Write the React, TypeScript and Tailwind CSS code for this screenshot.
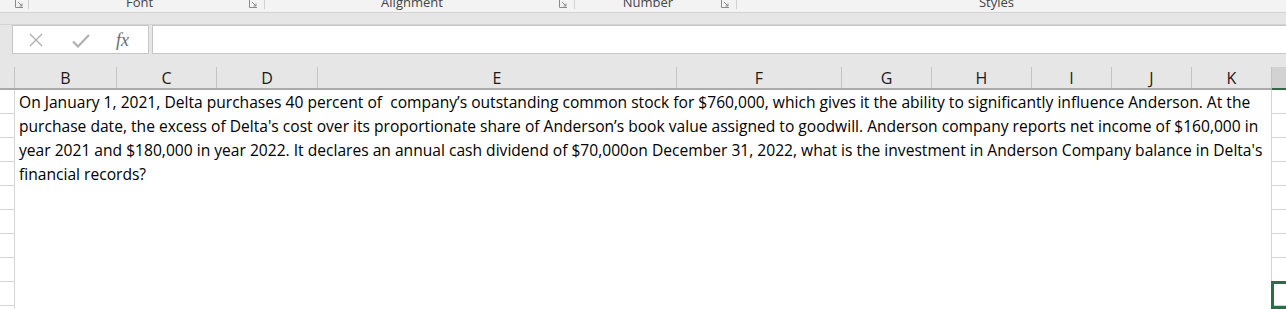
import React from "react";

const cols: { l: string; w: number }[] = [
  { l: "B", w: 102 },
  { l: "C", w: 100 },
  { l: "D", w: 101 },
  { l: "E", w: 359 },
  { l: "F", w: 165 },
  { l: "G", w: 90 },
  { l: "H", w: 100 },
  { l: "I", w: 80 },
  { l: "J", w: 80 },
  { l: "K", w: 80 },
];

function Launcher() {
  return (
    <svg width="9" height="8" viewBox="0 0 9 8" className="block">
      <path d="M0.5 0 V7.5 H8" stroke="#8a8a8a" strokeWidth="1" fill="none" />
      <path d="M3 2 L7 6 M7 3.5 V6 H4.5" stroke="#8a8a8a" strokeWidth="1" fill="none" />
    </svg>
  );
}

function Group({ label, width, launcher }: { label: string; width: number; launcher?: boolean }) {
  return (
    <div className="relative flex h-full shrink-0" style={{ width }}>
      <div className="flex flex-1 justify-center">
        <span className="-mt-[6px] text-[13px] leading-[16px] text-[#444]">{label}</span>
      </div>
      {launcher && (
        <div className="flex items-start pr-[6px]">
          <Launcher />
        </div>
      )}
      <div className="h-[9px] w-px bg-[#d0d0d0]" />
    </div>
  );
}

const lines = [
  "On January 1, 2021, Delta purchases 40 percent of\u00a0 company\u2019s outstanding common stock for $760,000, which gives it the ability to significantly influence Anderson. At the",
  "purchase date, the excess of Delta's cost over its proportionate share of Anderson\u2019s book value assigned to goodwill. Anderson company reports net income of $160,000 in",
  "year 2021 and $180,000 in year 2022. It declares an annual cash dividend of $70,000on December 31, 2022, what is the investment in Anderson Company balance in Delta's",
  "financial records?",
];

export default function App() {
  const rows = Array.from({ length: 10 });
  return (
    <div
      className="relative h-[309px] w-[1286px] overflow-hidden bg-white"
      style={{ fontFamily: '"Open Sans", "Noto Sans", sans-serif' }}
    >
      {/* ribbon group labels */}
      <div className="flex h-[13px] overflow-hidden border-b border-[#d4d4d4] bg-[#f3f3f3]">
        <div className="flex h-full w-[30px] shrink-0 pl-[15px]">
          <div className="pr-[4px]">
            <Launcher />
          </div>
          <div className="h-[9px] w-px bg-[#d0d0d0]" />
        </div>
        <Group label="Font" width={235} launcher />
        <Group label="Alignment" width={310} launcher />
        <Group label="Number" width={162} launcher />
        <div className="flex flex-1 justify-center pr-[30px]">
          <span className="-mt-[6px] text-[13px] leading-[16px] text-[#444]">Styles</span>
        </div>
      </div>
      {/* gray band */}
      <div className="h-[12px] border-b border-[#d4d4d4] bg-[#e6e6e6]" />
      {/* formula bar */}
      <div className="flex h-[29px] bg-[#e6e6e6] pl-[12px]">
        <div className="flex h-full w-[137px] items-center border border-[#c6c6c6] bg-white">
          <svg width="16" height="16" viewBox="0 0 16 16" className="ml-[15px]">
            <path d="M2 2 L14 14 M14 2 L2 14" stroke="#b0b0b0" strokeWidth="1.4" fill="none" />
          </svg>
          <svg width="18" height="14" viewBox="0 0 18 14" className="ml-[28px] mt-[3px]">
            <path d="M1 7.5 L6 12.5 L17 1" stroke="#b0b0b0" strokeWidth="2.2" fill="none" />
          </svg>
          <span
            className="ml-[26px] text-[18px] italic leading-none text-[#6b6b6b]"
            style={{ fontFamily: '"Liberation Serif", "DejaVu Serif", serif' }}
          >
            fx
          </span>
        </div>
        <div className="ml-[3px] h-full flex-1 border-y border-l border-[#c6c6c6] bg-white" />
      </div>
      {/* gray band */}
      <div className="h-[13px] bg-[#e6e6e6]" />
      {/* column header */}
      <div className="flex h-[23px] border-b-[2px] border-[#ababab] bg-[#e6e6e6] text-[#1a1a1a]">
        <div className="w-[15px] shrink-0 border-r border-[#c4c4c4]" />
        {cols.map((c) => (
          <div
            key={c.l}
            className="flex shrink-0 items-center justify-center border-r border-[#c4c4c4] text-[16px]"
            style={{ width: c.w }}
          >
            {c.l}
          </div>
        ))}
        <div className="relative flex-1 bg-[#d2d2d2]">
          <div className="absolute bottom-[-2px] left-0 right-0 h-[2px] bg-[#217346]" />
        </div>
      </div>
      {/* body */}
      <div className="flex">
        <div className="w-[15px] shrink-0 border-r border-[#d4d4d4]">
          {rows.map((_, i) => (
            <div key={i} className="h-[24px] border-b border-[#d4d4d4]" />
          ))}
        </div>
        <div
          className="w-[1257px] shrink-0 border-r border-[#d4d4d4] pl-[4px] text-[15.6px] leading-[24px] text-black"
          style={{ fontFamily: '"Open Sans", "Noto Sans", sans-serif' }}
        >
          {lines.map((t, i) => (
            <div key={i} className="whitespace-pre">
              {t}
            </div>
          ))}
        </div>
        <div className="flex-1">
          {rows.map((_, i) => (
            <div key={i} className="h-[24px] border-b border-[#d4d4d4]" />
          ))}
        </div>
      </div>
      {/* selected cell */}
      <div className="absolute left-[1271px] top-[281px] h-[28px] w-[20px] border-[3px] border-[#217346]" />
    </div>
  );
}
